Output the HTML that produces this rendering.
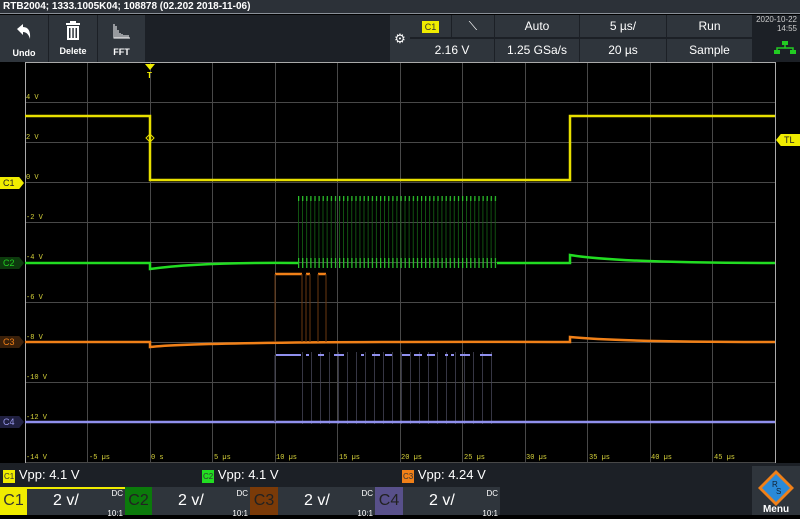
<!DOCTYPE html>
<html><head><meta charset="utf-8"><style>
*{margin:0;padding:0;box-sizing:border-box}
body{width:800px;height:515px;overflow:hidden;background:#000;font-family:"Liberation Sans",sans-serif;position:relative;color:#fff}
.abs{position:absolute}
.title{left:0;top:0;width:800px;height:14px;background:#2c3138;font-size:10px;font-weight:bold;line-height:14px;padding-left:3px;color:#fff;border-bottom:1px solid #8a9098}
.tb{top:15px;height:47px;background:#1c2026}
.btn{top:15px;height:47px;background:#2f353c;font-size:9px;font-weight:bold;text-align:center;color:#fff}
.cell{background:#2f353c;color:#fff;font-size:12px;text-align:center;line-height:22px;height:22px;top:0}
.meas{top:463px;height:24px;left:0;width:800px;background:#1c2026}
.ch{top:487px;height:28px;font-size:16px;line-height:28px;text-align:center}
.pan{top:487px;height:28px;background:#2f353c;font-size:16px;line-height:28px}
</style></head><body>
<div class="abs title">RTB2004; 1333.1005K04; 108878 (02.202 2018-11-06)</div>
<div class="abs tb" style="left:0;width:390px"></div>
<div class="abs btn" style="left:0;width:48px"><svg width="20" height="20" viewBox="0 0 20 20" style="margin-top:7px"><path d="M3 7 L9 2 L9 5 Q17 5 16 17 Q14 10 9 10 L9 13 Z" fill="#fff"/></svg><div style="margin-top:4px">Undo</div></div>
<div class="abs btn" style="left:49px;width:48px"><svg width="20" height="22" viewBox="0 0 20 22" style="margin-top:5px"><rect x="3" y="3" width="14" height="2" fill="#fff"/><rect x="7" y="1" width="6" height="2" fill="#fff"/><path d="M4 6h12v14H4z M6 8v10h1.5V8z M9.3 8v10h1.5V8z M12.5 8v10h1.5V8z" fill="#fff" fill-rule="evenodd"/></svg><div style="margin-top:2px">Delete</div></div>
<div class="abs btn" style="left:98px;width:47px"><svg width="20" height="18" viewBox="0 0 20 18" style="margin-top:7px"><path d="M2 2v14h16M4 4v12M6 8v8M8 11v5M10 12v4M12 13v3M14 13v3M16 13v3" stroke="#fff" stroke-width="1" fill="none"/></svg><div style="margin-top:5px">FFT</div></div>
<div class="abs" style="left:390px;top:15px;width:20px;height:47px;background:#2f353c;text-align:center;font-size:13px;line-height:47px">⚙</div>
<div class="abs" style="left:410px;top:15px;width:342px;height:47px;background:#1c2026">
<div class="abs cell" style="left:0;width:41px"><span style="background:#f0ec00;color:#333;font-size:9px;padding:1px 3px">C1</span></div>
<div class="abs cell" style="left:42px;width:42px">⟍</div>
<div class="abs cell" style="left:85px;width:84px">Auto</div>
<div class="abs cell" style="left:170px;width:86px">5 µs/</div>
<div class="abs cell" style="left:257px;width:85px">Run</div>
<div class="abs cell" style="top:24px;left:0;width:84px;height:23px">2.16 V</div>
<div class="abs cell" style="top:24px;left:85px;width:84px;height:23px">1.25 GSa/s</div>
<div class="abs cell" style="top:24px;left:170px;width:86px;height:23px">20 µs</div>
<div class="abs cell" style="top:24px;left:257px;width:85px;height:23px">Sample</div>
</div>
<div class="abs" style="left:752px;top:15px;width:48px;height:47px;background:#1c2026;font-size:8px;color:#ccc;text-align:right;padding-right:3px;line-height:9px">2020-10-22<br>14:55
<svg width="22" height="14" viewBox="0 0 22 14" style="display:block;margin:8px 0 0 22px"><rect x="8" y="0" width="6" height="4" fill="#2c2"/><rect x="0" y="9" width="6" height="4" fill="#2c2"/><rect x="16" y="9" width="6" height="4" fill="#2c2"/><path d="M11 4v3M3 9V7h16v2" stroke="#2c2" stroke-width="1.5" fill="none"/></svg></div>

<svg class="abs" style="left:0;top:62px" width="800" height="401" viewBox="0 62 800 401">
<defs>
<pattern id="gb" x="298" y="0" width="4.1" height="10" patternUnits="userSpaceOnUse"><rect x="0" y="0" width="0.8" height="10" fill="#146414"/></pattern>
<pattern id="gt" x="298" y="0" width="4.1" height="10" patternUnits="userSpaceOnUse"><rect x="0" y="0" width="1.2" height="10" fill="#2cc82c"/></pattern>
<pattern id="pv" x="302" y="0" width="9" height="10" patternUnits="userSpaceOnUse"><rect x="0" y="0" width="0.8" height="10" fill="#445"/></pattern>
</defs>
<g stroke="#484848" stroke-width="1">
<path d="M25.5 62v401M87.5 62v401M150.5 62v401M212.5 62v401M275.5 62v401M337.5 62v401M400.5 62v401M462.5 62v401M525.5 62v401M587.5 62v401M650.5 62v401M712.5 62v401M775.5 62v401"/>
<path d="M25 102.5h750M25 142.5h750M25 182.5h750M25 222.5h750M25 262.5h750M25 302.5h750M25 342.5h750M25 382.5h750M25 422.5h750M25 462.5h750"/>
</g>
<path d="M25 62.5h750M25.5 62v401M775.5 62v401" stroke="#aaa"/>
<g font-size="7" fill="#d7d23a" font-family="Liberation Mono,monospace">
<text x="26" y="99">4 V</text><text x="26" y="139">2 V</text><text x="26" y="179">0 V</text><text x="26" y="219">-2 V</text><text x="26" y="259">-4 V</text><text x="26" y="299">-6 V</text><text x="26" y="339">-8 V</text><text x="26" y="379">-10 V</text><text x="26" y="419">-12 V</text><text x="26" y="459">-14 V</text>
<text x="89" y="459">-5 µs</text><text x="151" y="459">0 s</text><text x="214" y="459">5 µs</text><text x="276" y="459">10 µs</text><text x="339" y="459">15 µs</text><text x="401" y="459">20 µs</text><text x="464" y="459">25 µs</text><text x="526" y="459">30 µs</text><text x="589" y="459">35 µs</text><text x="651" y="459">40 µs</text><text x="714" y="459">45 µs</text>
</g>
<rect x="298" y="198" width="200" height="66" fill="url(#gb)"/>
<rect x="298" y="196" width="200" height="5" fill="url(#gt)"/>
<rect x="298" y="258" width="200" height="10" fill="url(#gt)"/>
<rect x="302" y="352" width="190" height="72" fill="url(#pv)"/>
<path d="M25 116H150V180H570V116H775" stroke="#e8e000" stroke-width="2.5" fill="none"/>
<path d="M25 263H150V269Q200 262 298 263M497 263H570V255Q620 263 775 263" stroke="#22dd22" stroke-width="2.5" fill="none"/>
<path d="M25 342H150V347Q200 341 570 342V337Q620 342 775 342" stroke="#f08018" stroke-width="2.5" fill="none"/>
<path d="M275 274h27M306 274h4M318 274h8" stroke="#f08018" stroke-width="2.5"/>
<path d="M275 274v68M302 274v68M306 274v68M310 274v68M318 274v68M326 274v68" stroke="#6a3810" stroke-width="1"/>
<path d="M25 422H775" stroke="#9090ee" stroke-width="2.5" fill="none"/>
<path d="M276 355h25M306 355h3M318 355h6M334 355h10M361 355h3M372 355h8M385 355h7M402 355h8M414 355h8M427 355h8M445 355h3M451 355h3M460 355h10M480 355h12" stroke="#9090ee" stroke-width="2"/>
<path d="M275 355v67" stroke="#445" stroke-width="1"/>
<path d="M145 64h10l-5 6z" fill="#f0ec00"/><text x="147" y="78" font-size="8" fill="#f0ec00" font-weight="bold">T</text>
<path d="M150 134l4 4-4 4-4-4z" stroke="#e8e000" fill="none"/>
</svg>
<div class="abs" style="left:0;top:177px;width:24px;height:12px;background:#f0ec00;color:#222;font-size:9px;line-height:12px;padding-left:3px;clip-path:polygon(0 0,80% 0,100% 50%,80% 100%,0 100%)">C1</div>
<div class="abs" style="left:0;top:257px;width:24px;height:12px;background:#0d3a0d;color:#2c2;font-size:9px;line-height:12px;padding-left:3px;clip-path:polygon(0 0,80% 0,100% 50%,80% 100%,0 100%)">C2</div>
<div class="abs" style="left:0;top:336px;width:24px;height:12px;background:#3a200a;color:#f08018;font-size:9px;line-height:12px;padding-left:3px;clip-path:polygon(0 0,80% 0,100% 50%,80% 100%,0 100%)">C3</div>
<div class="abs" style="left:0;top:416px;width:24px;height:12px;background:#202040;color:#99e;font-size:9px;line-height:12px;padding-left:3px;clip-path:polygon(0 0,80% 0,100% 50%,80% 100%,0 100%)">C4</div>
<div class="abs" style="left:776px;top:134px;width:24px;height:12px;background:#f0ec00;color:#222;font-size:9px;line-height:12px;padding-left:8px;clip-path:polygon(0 50%,20% 0,100% 0,100% 100%,20% 100%)">TL</div>

<div class="abs meas"></div>
<div class="abs" style="left:3px;top:468px;font-size:13px;line-height:14px"><span style="background:#f0ec00;color:#333;font-size:8px;padding:2px 1px">C1</span> Vpp: 4.1 V</div>
<div class="abs" style="left:202px;top:468px;font-size:13px;line-height:14px"><span style="background:#22dd22;color:#333;font-size:8px;padding:2px 1px">C2</span> Vpp: 4.1 V</div>
<div class="abs" style="left:402px;top:468px;font-size:13px;line-height:14px"><span style="background:#f08018;color:#333;font-size:8px;padding:2px 1px">C3</span> Vpp: 4.24 V</div>
<div class="abs" style="left:0;top:487px;width:800px;height:28px;background:#1c2026"></div>
<div class="abs ch" style="left:0;width:27px;background:#f0ec00;color:#333">C1</div>
<div class="abs pan" style="left:27px;width:98px;border-top:2px solid #f0ec00"><span style="position:absolute;left:26px;top:-2px">2 v/</span><span style="position:absolute;right:2px;top:0;font-size:8px;line-height:10px;text-align:right">DC<br><br>10:1</span></div>
<div class="abs ch" style="left:125px;width:27px;background:#0b7a0b;color:#222">C2</div>
<div class="abs pan" style="left:152px;width:98px"><span style="position:absolute;left:26px">2 v/</span><span style="position:absolute;right:2px;top:2px;font-size:8px;line-height:10px;text-align:right">DC<br><br>10:1</span></div>
<div class="abs ch" style="left:250px;width:28px;background:#7a3a08;color:#222">C3</div>
<div class="abs pan" style="left:278px;width:97px"><span style="position:absolute;left:26px">2 v/</span><span style="position:absolute;right:2px;top:2px;font-size:8px;line-height:10px;text-align:right">DC<br><br>10:1</span></div>
<div class="abs ch" style="left:375px;width:28px;background:#58508a;color:#222">C4</div>
<div class="abs pan" style="left:403px;width:97px"><span style="position:absolute;left:26px">2 v/</span><span style="position:absolute;right:2px;top:2px;font-size:8px;line-height:10px;text-align:right">DC<br><br>10:1</span></div>
<div class="abs" style="left:752px;top:466px;width:48px;height:49px;background:#2f353c">
<svg width="40" height="40" viewBox="0 0 40 40" style="position:absolute;left:4px;top:2px"><path d="M20 2L38 20L20 38L2 20Z" fill="#f08018"/><path d="M20 6L34 20L20 34L6 20Z" fill="#2a8ad8"/><text x="16" y="19" font-size="8" fill="#123">R</text><text x="20" y="26" font-size="8" fill="#123">S</text></svg>
<div style="position:absolute;bottom:0;width:48px;text-align:center;font-size:10px;font-weight:bold">Menu</div></div>
</body></html>
